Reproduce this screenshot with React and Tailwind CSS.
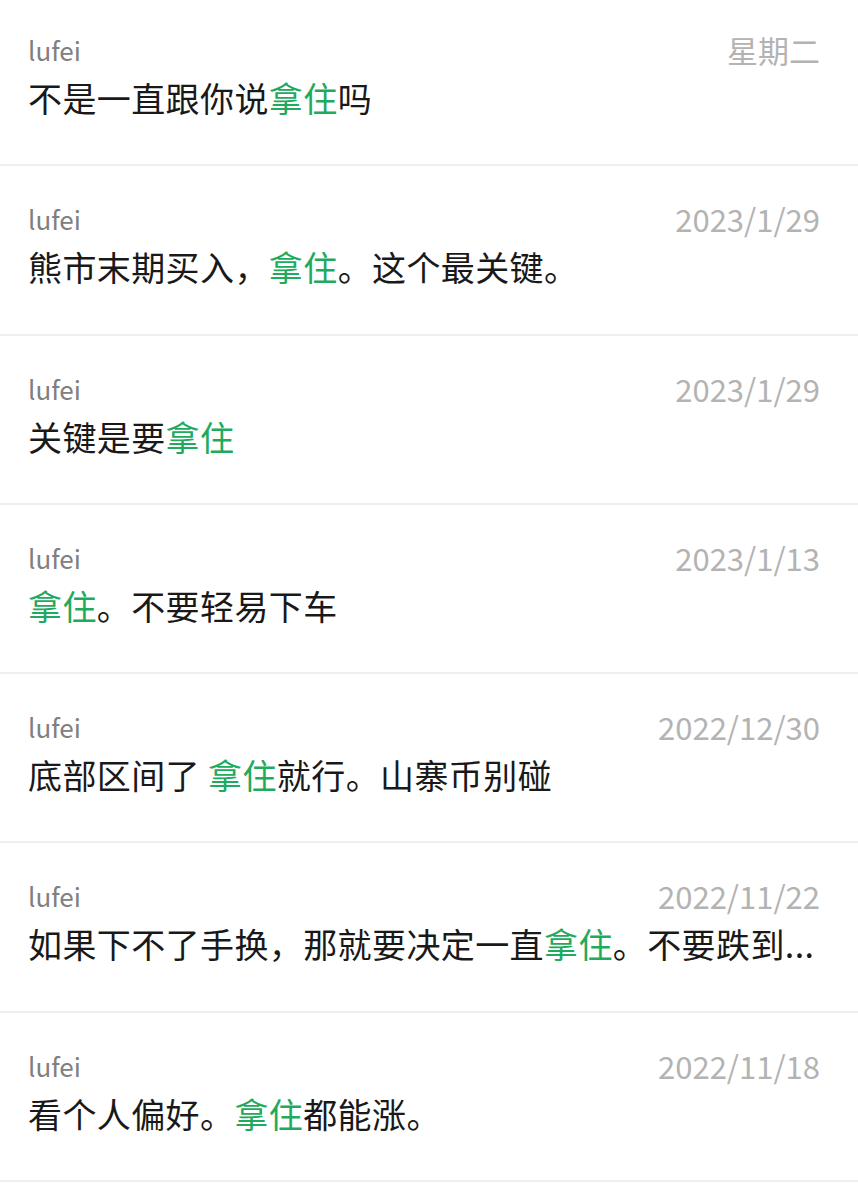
import React from "react";

const GREEN = "拿住";

const MESSAGES = [
  { name: "lufei", time: "星期二", parts: ["不是一直跟你说", GREEN, "吗"] },
  { name: "lufei", time: "2023/1/29", parts: ["熊市末期买入，", GREEN, "。这个最关键。"] },
  { name: "lufei", time: "2023/1/29", parts: ["关键是要", GREEN, ""] },
  { name: "lufei", time: "2023/1/13", parts: ["", GREEN, "。不要轻易下车"] },
  { name: "lufei", time: "2022/12/30", parts: ["底部区间了 ", GREEN, "就行。山寨币别碰"] },
  // shortened by hand so the dots look like the iOS "..."
  { name: "lufei", time: "2022/11/22", parts: ["如果下不了手换，那就要决定一直", GREEN, "。不要跌到..."] },
  { name: "lufei", time: "2022/11/18", parts: ["看个人偏好。", GREEN, "都能涨。"] },
];

function Row({ name, time, parts }) {
  return (
    <div className="h-[169.3px] border-b-2 border-[#efefef] pl-[28px] pr-[38px] pt-[37px]">
      <div className="flex items-center justify-between h-[32px]">
        <span className="text-[26px] leading-[32px] text-[#808080]">{name}</span>
        <span className="text-[31px] leading-[34px] text-[#b3b3b3]">{time}</span>
      </div>
      <div className="mt-[7px] text-[34px] leading-[50px] tracking-[0.4px] text-[#191919] whitespace-nowrap">
        {parts[0]}
        <span className="text-[#1faa5e]">{parts[1]}</span>
        {parts[2]}
      </div>
    </div>
  );
}

export default function App() {
  return (
    <div
      className="w-[858px] h-[1200px] bg-white overflow-hidden"
      style={{ fontFamily: '"Noto Sans CJK SC", "Noto Sans", sans-serif' }}
    >
      <div className="-mt-[3px]">
        {MESSAGES.map((m, i) => (
          <Row key={i} {...m} />
        ))}
      </div>
    </div>
  );
}
